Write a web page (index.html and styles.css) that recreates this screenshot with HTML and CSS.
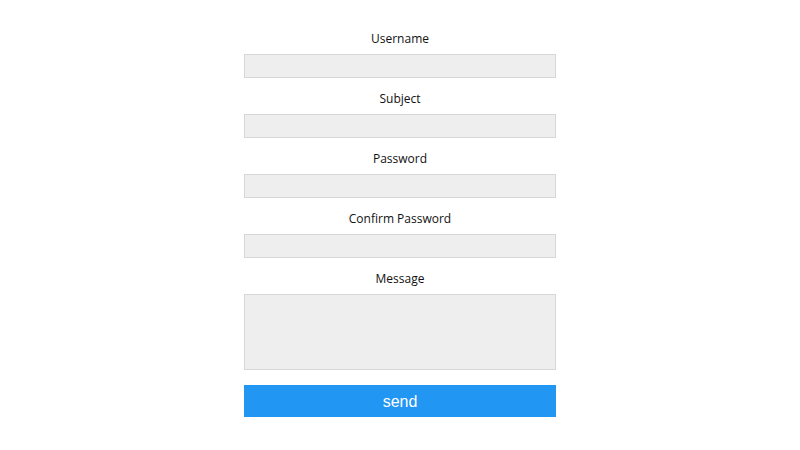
FILE: index.html
```html
<!DOCTYPE html>
<html lang="en">
<head>
    <meta charset="UTF-8">
    <meta name="viewport" content="width=device-width, initial-scale=1.0">
    <title>Contact</title>
    <link rel="stylesheet" href="styles.css">
</head>
<body>
    <form class="contact-form">
        <label for="username">Username</label>
        <input type="text" id="username">

        <label for="subject">Subject</label>
        <input type="text" id="subject">

        <label for="password">Password</label>
        <input type="password" id="password">

        <label for="confirm">Confirm Password</label>
        <input type="password" id="confirm">

        <label for="message">Message</label>
        <textarea id="message"></textarea>

        <button type="button">send</button>
    </form>
</body>
</html>
```

FILE: styles.css
```css
body {
    margin: 0;
    padding-top: 29px;
    background-color: #fff;
    font-family: 'Open Sans', sans-serif;
}

.contact-form {
    width: 312px;
    margin: 0 auto;
    display: flex;
    flex-direction: column;
}

label {
    display: block;
    text-align: center;
    font-size: 12px;
    line-height: 20px;
    color: #111;
    margin-bottom: 5px;
}

input,
textarea {
    box-sizing: border-box;
    width: 100%;
    height: 24px;
    margin: 0 0 11px;
    padding: 4px 6px;
    background-color: #eee;
    border: 1px solid #d6d6d6;
    font-family: 'Open Sans', sans-serif;
    font-size: 13px;
}

textarea {
    height: 76px;
    margin-bottom: 15px;
    resize: none;
}

button {
    height: 32px;
    padding: 2px 0 0;
    background-color: #2196f3;
    color: #fff;
    border: none;
    font-family: 'Liberation Sans', Arial, sans-serif;
    font-size: 16px;
    cursor: pointer;
}
```
